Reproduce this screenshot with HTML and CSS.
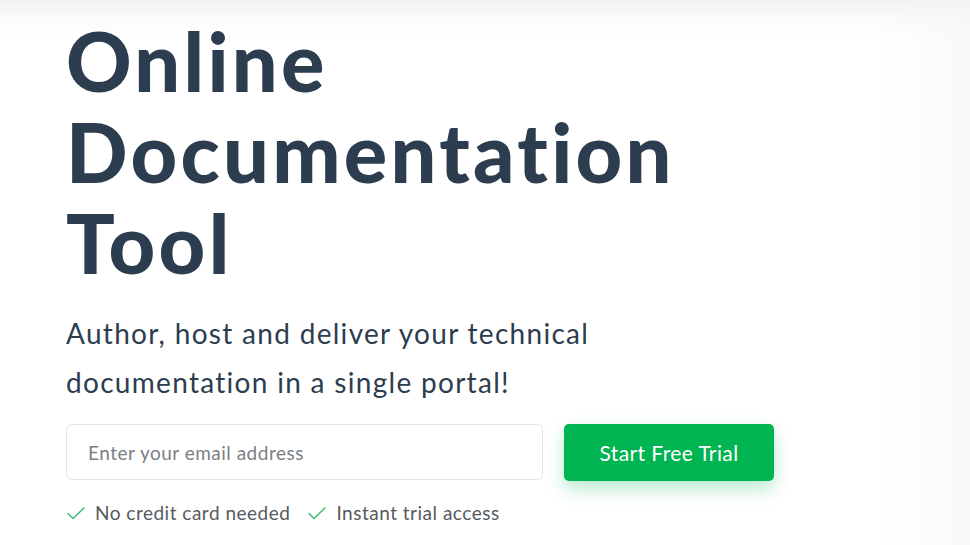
FILE: index.html
```html
<!DOCTYPE html>
<html>
<head>
<meta charset="utf-8">
<link rel="stylesheet" href="styles.css">
</head>
<body>
<div class="page">
  <section class="hero">
    <h1 class="title">Online<br>Documentation<br>Tool</h1>
    <p class="lead">Author, host and deliver your technical<br>documentation in a single portal!</p>
    <form class="signup">
      <input class="email" type="text" placeholder="Enter your email address">
      <button class="cta" type="button">Start Free Trial</button>
    </form>
    <ul class="perks">
      <li class="perk"><svg class="check" viewBox="0 0 20 20" width="20" height="20"><path d="M2 10.5 L7 15.5 L18 5" fill="none" stroke="#3dbb6e" stroke-width="1.5" stroke-linecap="round" stroke-linejoin="round"/></svg>No credit card needed</li>
      <li class="perk"><svg class="check" viewBox="0 0 20 20" width="20" height="20"><path d="M2 10.5 L7 15.5 L18 5" fill="none" stroke="#3dbb6e" stroke-width="1.5" stroke-linecap="round" stroke-linejoin="round"/></svg>Instant trial access</li>
    </ul>
  </section>
</div>
</body>
</html>
```
FILE: styles.css
```css
html, body {
  margin: 0;
  padding: 0;
}
body {
  width: 970px;
  height: 545px;
  overflow: hidden;
  font-family: Lato, "Noto Sans", sans-serif;
  font-variant-ligatures: none;
  background: linear-gradient(to bottom, #f1f1f1 0px, #fbfbfb 20px, #ffffff 40px);
}
.page {
  height: 545px;
  background: linear-gradient(to right, rgba(255,255,255,0) 880px, rgba(245,245,245,0.6) 970px);
}
.hero {
  padding: 15px 0 0 66px;
}
.title {
  margin: 0;
  font-size: 81px;
  line-height: 91px;
  font-weight: 900;
  color: #2c3d50;
  letter-spacing: 3.3px;
}
.lead {
  margin: 21px 0 0;
  font-size: 28px;
  line-height: 49px;
  font-weight: 400;
  color: #2c3d50;
  letter-spacing: 1.3px;
}
.signup {
  display: flex;
  gap: 21px;
  margin-top: 17px;
}
.email {
  box-sizing: border-box;
  width: 477px;
  height: 56px;
  border: 1px solid #e4e4e4;
  border-radius: 6px;
  padding: 0 21px;
  font-family: inherit;
  font-size: 19px;
  letter-spacing: 0.5px;
  color: #333;
  background: #fff;
  outline: none;
}
.email::placeholder {
  color: #7a7f86;
}
.cta {
  width: 210px;
  height: 57px;
  border: none;
  border-radius: 5px;
  background: #00b451;
  color: #fff;
  font-family: inherit;
  font-size: 21px;
  letter-spacing: 0.4px;
  box-shadow: 0 8px 18px rgba(0, 180, 81, 0.28);
}
.perks {
  list-style: none;
  display: flex;
  gap: 17px;
  margin: 20px 0 0;
  padding: 0;
}
.perk {
  display: flex;
  align-items: center;
  gap: 9px;
  font-size: 19px;
  letter-spacing: 0.5px;
  color: #555a60;
}
.check {
  flex: none;
}
```
